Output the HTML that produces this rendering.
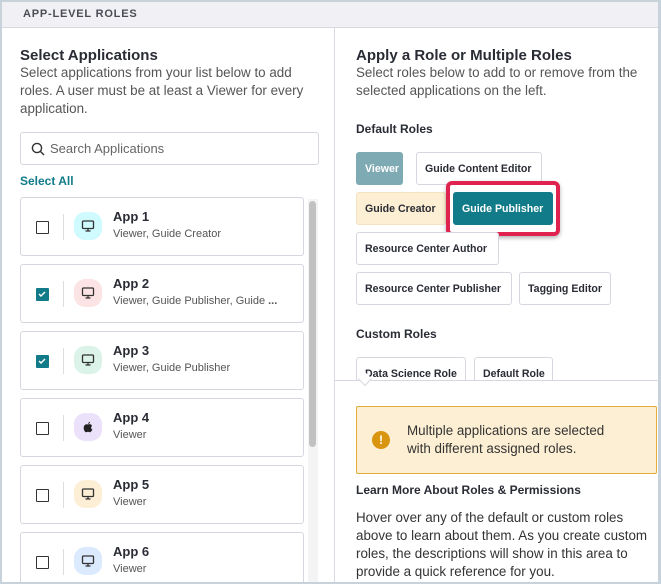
<!DOCTYPE html><html><head><style>
*{box-sizing:border-box;margin:0;padding:0}
body{width:661px;height:584px;overflow:hidden;background:#c7d2db;font-family:"Liberation Sans",sans-serif;color:#2a2c35;position:relative}
.frame{position:absolute;left:2px;top:2px;width:656px;height:580px;background:#fff;overflow:hidden}
.hdr{position:absolute;left:0;top:0;width:656px;height:26px;background:#f1f1f5;border-bottom:1px solid #d6d8df;font-size:11px;font-weight:bold;letter-spacing:0.8px;color:#4a4c55;padding:6px 0 0 21px}
.div{position:absolute;left:332px;top:26px;width:1px;height:560px;background:#dadce3}
.a{position:absolute;white-space:nowrap}
h2{font-size:15px;font-weight:bold;color:#2a2c35}
.p{font-size:13.4px;color:#555;line-height:18px}
.search{position:absolute;left:18px;top:130px;width:299px;height:33px;border:1px solid #d6d8df;border-radius:3px;font-size:13px;color:#666;padding:8px 0 0 29px}
.card{position:absolute;left:18px;width:284px;height:59px;border:1px solid #d6d8df;border-radius:3px}
.cb{position:absolute;left:15px;top:23px;width:13px;height:13px;border:1.5px solid #333;border-radius:1px}
.cb.on{background:#127b8a;border-color:#127b8a}
.sep{position:absolute;left:42px;top:16px;width:1px;height:26px;background:#ddd}
.ic{position:absolute;left:53px;top:14px;width:28px;height:28px;border-radius:11px}
.ic svg{position:absolute;left:7px;top:7px}
.nm{position:absolute;left:92px;top:11px;font-size:13px;font-weight:bold}
.sb{position:absolute;left:92px;top:30px;font-size:11px;color:#555}
.chip{position:absolute;height:33px;border:1px solid #d6d8df;border-radius:3px;font-size:10.6px;font-weight:bold;padding:10px 0 0 8px;color:#2a2c35;background:#fff;white-space:nowrap}
</style></head><body><div class="frame">
<div class="hdr">APP-LEVEL ROLES</div>
<div class="div"></div>
<h2 class="a" style="left:18px;top:45px">Select Applications</h2>
<div class="a p" style="left:18px;top:62px">Select applications from your list below to add<br>roles. A user must be at least a Viewer for every<br>application.</div>
<div class="search"><svg style="position:absolute;left:10px;top:9px" width="14" height="14" viewBox="0 0 14 14"><circle cx="6" cy="6" r="4.6" fill="none" stroke="#333" stroke-width="1.4"/><path d="M9.5 9.5 13 13" stroke="#333" stroke-width="1.4"/></svg>Search Applications</div>
<div class="a" style="left:18px;top:172px;font-size:12px;font-weight:bold;color:#127b8a">Select All</div>
<div class="a" style="left:306px;top:197px;width:10px;height:390px;background:#f4f4f4"></div>
<div class="a" style="left:307px;top:199px;width:7px;height:246px;background:#c1c1c1;border-radius:4px"></div>
<div class="card" style="top:195px"><div class="cb"></div><div class="sep"></div><div class="ic" style="background:#cffafe"><svg width="14" height="14" viewBox="0 0 14 14"><rect x="1.5" y="2" width="11" height="7.5" rx="1" fill="none" stroke="#333" stroke-width="1.3"/><path d="M7 9.5v2.5M4.5 12h5" stroke="#333" stroke-width="1.3"/></svg></div><div class="nm">App 1</div><div class="sb">Viewer, Guide Creator</div></div>
<div class="card" style="top:262px"><div class="cb on"><svg width="10" height="10" viewBox="0 0 10 10" style="position:absolute;left:0;top:0"><path d="M2 5l2 2 4-4" stroke="#fff" stroke-width="1.5" fill="none"/></svg></div><div class="sep"></div><div class="ic" style="background:#fde4e4"><svg width="14" height="14" viewBox="0 0 14 14"><rect x="1.5" y="2" width="11" height="7.5" rx="1" fill="none" stroke="#333" stroke-width="1.3"/><path d="M7 9.5v2.5M4.5 12h5" stroke="#333" stroke-width="1.3"/></svg></div><div class="nm">App 2</div><div class="sb">Viewer, Guide Publisher, Guide <b>...</b></div></div>
<div class="card" style="top:329px"><div class="cb on"><svg width="10" height="10" viewBox="0 0 10 10" style="position:absolute;left:0;top:0"><path d="M2 5l2 2 4-4" stroke="#fff" stroke-width="1.5" fill="none"/></svg></div><div class="sep"></div><div class="ic" style="background:#dcf3ea"><svg width="14" height="14" viewBox="0 0 14 14"><rect x="1.5" y="2" width="11" height="7.5" rx="1" fill="none" stroke="#333" stroke-width="1.3"/><path d="M7 9.5v2.5M4.5 12h5" stroke="#333" stroke-width="1.3"/></svg></div><div class="nm">App 3</div><div class="sb">Viewer, Guide Publisher</div></div>
<div class="card" style="top:396px"><div class="cb"></div><div class="sep"></div><div class="ic" style="background:#ebe1fa"><svg width="14" height="14" viewBox="0 0 14 14"><path d="M7 4.5C8 3.8 10.5 3.8 11 6 9.8 6.8 9.8 8.8 11.3 9.4 10.8 11 9.8 12.3 8.8 12.3 8 12.3 7.7 11.8 7 11.8S6 12.3 5.2 12.3C3.8 12.3 2.5 9.5 2.7 7.5 2.9 4.5 5.8 3.8 7 4.5Z" fill="#222"/><path d="M7.2 4C7.2 2.8 8 1.8 9 1.7 9 2.9 8.2 3.9 7.2 4Z" fill="#222"/></svg></div><div class="nm">App 4</div><div class="sb">Viewer</div></div>
<div class="card" style="top:463px"><div class="cb"></div><div class="sep"></div><div class="ic" style="background:#fcefd6"><svg width="14" height="14" viewBox="0 0 14 14"><rect x="1.5" y="2" width="11" height="7.5" rx="1" fill="none" stroke="#333" stroke-width="1.3"/><path d="M7 9.5v2.5M4.5 12h5" stroke="#333" stroke-width="1.3"/></svg></div><div class="nm">App 5</div><div class="sb">Viewer</div></div>
<div class="card" style="top:530px"><div class="cb"></div><div class="sep"></div><div class="ic" style="background:#dbeafe"><svg width="14" height="14" viewBox="0 0 14 14"><rect x="1.5" y="2" width="11" height="7.5" rx="1" fill="none" stroke="#333" stroke-width="1.3"/><path d="M7 9.5v2.5M4.5 12h5" stroke="#333" stroke-width="1.3"/></svg></div><div class="nm">App 6</div><div class="sb">Viewer</div></div>
<h2 class="a" style="left:354px;top:45px">Apply a Role or Multiple Roles</h2>
<div class="a p" style="left:354px;top:62px">Select roles below to add to or remove from the<br>selected applications on the left.</div>
<div class="a" style="left:354px;top:120px;font-size:12px;font-weight:bold">Default Roles</div>
<div class="chip" style="left:354px;top:150px;width:47px;background:#7eaab3;border-color:#7eaab3;color:#fff">Viewer</div>
<div class="chip" style="left:414px;top:150px;width:126px">Guide Content Editor</div>
<div class="chip" style="left:354px;top:190px;width:90px;background:#fdefd3;border-color:#f3e3c2">Guide Creator</div>
<div class="a" style="left:444px;top:179px;width:114px;height:55px;border:4px solid #e0234e;border-radius:6px;box-shadow:0 2px 4px rgba(0,0,0,.3)"></div>
<div class="chip" style="left:451px;top:190px;width:100px;background:#127b8a;border-color:#127b8a;color:#fff">Guide Publisher</div>
<div class="chip" style="left:354px;top:230px;width:143px">Resource Center Author</div>
<div class="chip" style="left:354px;top:270px;width:156px">Resource Center Publisher</div>
<div class="chip" style="left:517px;top:270px;width:92px">Tagging Editor</div>
<div class="a" style="left:354px;top:325px;font-size:12px;font-weight:bold">Custom Roles</div>
<div class="chip" style="left:354px;top:355px;width:110px;height:40px">Data Science Role</div>
<div class="chip" style="left:472px;top:355px;width:79px;height:40px">Default Role</div>
<div class="a" style="left:333px;top:378px;width:323px;height:210px;background:#fff;border-top:1px solid #d6d8df"></div>
<div class="a" style="left:358px;top:372px;width:10px;height:10px;background:#fff;border-right:1px solid #d6d8df;border-bottom:1px solid #d6d8df;transform:rotate(45deg)"></div>
<div class="a" style="left:354px;top:404px;width:301px;height:68px;background:#fdefd3;border:1px solid #e2ad3a;border-radius:2px"></div>
<div class="a" style="left:370px;top:429px;width:18px;height:18px;border-radius:50%;background:#d9950f;color:#fff;font-size:12px;font-weight:bold;text-align:center;line-height:18px">!</div>
<div class="a p" style="left:405px;top:420px;color:#333">Multiple applications are selected<br>with different assigned roles.</div>
<div class="a" style="left:354px;top:481px;font-size:12px;font-weight:bold">Learn More About Roles &amp; Permissions</div>
<div class="a p" style="left:354px;top:507px;color:#333">Hover over any of the default or custom roles<br>above to learn about them. As you create custom<br>roles, the descriptions will show in this area to<br>provide a quick reference for you.</div>
</div></body></html>
